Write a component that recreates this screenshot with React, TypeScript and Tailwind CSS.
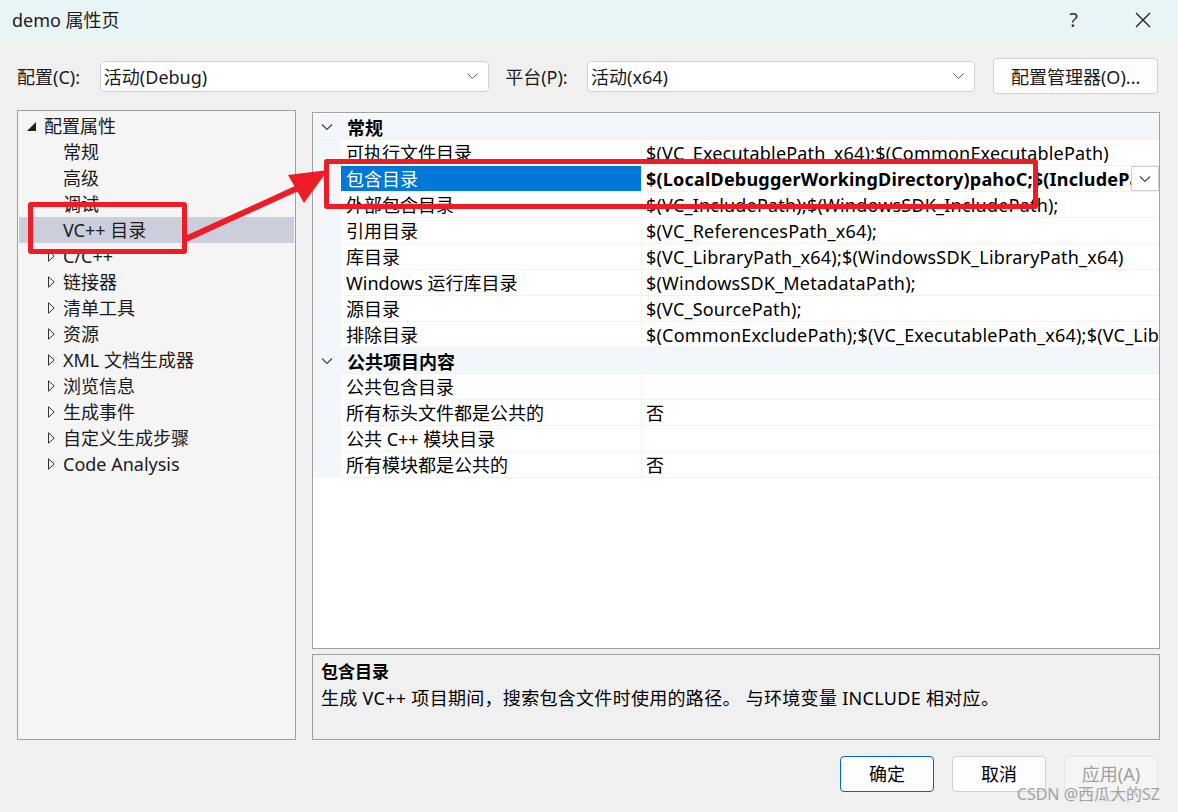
import React from "react";

const font = { fontFamily: '"Noto Sans", "Noto Sans CJK SC", sans-serif' };

const treeItems = [
  { label: "常规", kind: "leaf" },
  { label: "高级", kind: "leaf" },
  { label: "调试", kind: "leaf" },
  { label: "VC++ 目录", kind: "leaf", selected: true },
  { label: "C/C++", kind: "branch" },
  { label: "链接器", kind: "branch" },
  { label: "清单工具", kind: "branch" },
  { label: "资源", kind: "branch" },
  { label: "XML 文档生成器", kind: "branch" },
  { label: "浏览信息", kind: "branch" },
  { label: "生成事件", kind: "branch" },
  { label: "自定义生成步骤", kind: "branch" },
  { label: "Code Analysis", kind: "branch" },
];

const general = [
  ["可执行文件目录", "$(VC_ExecutablePath_x64);$(CommonExecutablePath)"],
  ["包含目录", "$(LocalDebuggerWorkingDirectory)pahoC;$(IncludePath)"],
  ["外部包含目录", "$(VC_IncludePath);$(WindowsSDK_IncludePath);"],
  ["引用目录", "$(VC_ReferencesPath_x64);"],
  ["库目录", "$(VC_LibraryPath_x64);$(WindowsSDK_LibraryPath_x64)"],
  ["Windows 运行库目录", "$(WindowsSDK_MetadataPath);"],
  ["源目录", "$(VC_SourcePath);"],
  ["排除目录", "$(CommonExcludePath);$(VC_ExecutablePath_x64);$(VC_LibraryPath_x64)"],
];

const shared = [
  ["公共包含目录", ""],
  ["所有标头文件都是公共的", "否"],
  ["公共 C++ 模块目录", ""],
  ["所有模块都是公共的", "否"],
];

function Chevron({ className = "" }: { className?: string }) {
  return (
    <svg width="12" height="8" viewBox="0 0 12 8" className={className}>
      <path d="M1 1.5 L6 6.5 L11 1.5" fill="none" stroke="#444" strokeWidth="1.2" />
    </svg>
  );
}

function Select({ value, width }: { value: string; width: string }) {
  return (
    <div className={`${width} h-[31px] bg-white border border-[#d0d0d0] rounded-[4px] flex items-center pl-[3px] pr-[10px]`}>
      <span className="flex-1 text-[18px] text-[#1a1a1a] pt-[2px]">{value}</span>
      <svg width="11" height="7" viewBox="0 0 11 7">
        <path d="M0.5 0.5 L5.5 5.5 L10.5 0.5" fill="none" stroke="#606060" strokeWidth="1" />
      </svg>
    </div>
  );
}

function CategoryRow({ label }: { label: string }) {
  return (
    <div className="h-[26px] flex items-center bg-[#f3f6fa] border-b border-[#eef1f5]">
      <div className="w-[28px] flex justify-center">
        <Chevron />
      </div>
      <span className="pl-[6px] pt-[3px] text-[18px] font-bold text-black">{label}</span>
    </div>
  );
}

function PropRow({ name, value, selected }: { name: string; value: string; selected?: boolean }) {
  return (
    <div className="h-[26px] flex bg-[#f3f6fa]">
      <div className="w-[28px]" />
      <div
        className={`w-[300px] h-[26px] flex items-center pl-[5px] pt-[2px] border-b border-[#eef1f5] text-[18px] whitespace-nowrap overflow-hidden ${
          selected ? "bg-[#0078d7] text-white" : "bg-white text-black"
        }`}
      >
        {name}
      </div>
      <div className="flex-1 min-w-0 h-[26px] flex items-center bg-white border-b border-l border-[#eef1f5] pl-[4px] pt-[2px] overflow-hidden relative">
        <span className={`whitespace-nowrap text-[18px] tracking-[0.2px] text-black ${selected ? "font-bold" : ""}`}>{value}</span>
        {selected && (
          <div className="absolute right-0 top-0 w-[28px] h-[25px] bg-white border border-[#cfcfcf] flex items-center justify-center">
            <Chevron />
          </div>
        )}
      </div>
    </div>
  );
}

function Button({ label, primary, disabled }: { label: string; primary?: boolean; disabled?: boolean }) {
  return (
    <div
      className={`w-[94px] h-[36px] rounded-[4px] flex items-center justify-center text-[18px] ${
        primary
          ? "bg-[#fdfdfd] border border-[#0067c0] text-black"
          : disabled
          ? "bg-[#f5f5f5] border border-[#e5e5e5] text-[#a0a0a0]"
          : "bg-[#fdfdfd] border border-[#d0d0d0] text-black"
      }`}
    >
      {label}
    </div>
  );
}

export default function App() {
  return (
    <div style={font} className="w-[1178px] h-[812px] relative overflow-hidden bg-[#f0f0f0]">
      {/* title bar */}
      <div className="h-[40px] bg-[#e9f4f7] flex items-center pl-[12px]">
        <span className="flex-1 text-[18px] text-[#1a1a1a]">demo 属性页</span>
        <span className="text-[20px] text-[#333] mr-[57px]">?</span>
        <svg width="16" height="16" viewBox="0 0 16 16" className="mr-[27px]">
          <path d="M1 1 L15 15 M15 1 L1 15" stroke="#222" strokeWidth="1.4" />
        </svg>
      </div>

      {/* config row */}
      <div className="h-[70px] flex items-center pl-[17px] pr-[20px] pt-[2px]">
        <span className="w-[83px] text-[18px] text-[#1a1a1a] pt-[2px]">配置(C):</span>
        <Select value="活动(Debug)" width="w-[390px]" />
        <span className="ml-[16px] w-[82px] text-[18px] text-[#1a1a1a] pt-[2px]">平台(P):</span>
        <Select value="活动(x64)" width="w-[389px]" />
        <div className="ml-[18px] w-[165px] h-[36px] bg-[#fdfdfd] border border-[#d0d0d0] rounded-[4px] flex items-center justify-center text-[18px] text-[#1a1a1a] pt-[2px]">
          配置管理器(O)...
        </div>
      </div>

      {/* main area */}
      <div className="flex pl-[17px] gap-[16px] h-[630px]">
        {/* tree */}
        <div className="w-[279px] h-[630px] bg-[#f5f5f5] border border-[#a0a0a0] pt-[2px] pl-[1px] pr-[1px]">
          <div className="h-[26px] flex items-center">
            <svg width="9" height="9" viewBox="0 0 9 9" className="ml-[8px] mr-[8px]">
              <path d="M9 0 L9 9 L0 9 Z" fill="#222" />
            </svg>
            <span className="text-[18px] text-[#1a1a1a] pt-[1px]">配置属性</span>
          </div>
          {treeItems.map((it) => (
            <div
              key={it.label}
              className={`h-[26px] flex items-center ${it.selected ? "bg-[#cccedb]" : ""}`}
            >
              <div className="w-[44px] flex justify-end pr-[8px]">
                {it.kind === "branch" && (
                  <svg width="7" height="12" viewBox="0 0 7 12">
                    <path d="M0.5 0.8 L6.2 6 L0.5 11.2 Z" fill="none" stroke="#333" strokeWidth="1" />
                  </svg>
                )}
              </div>
              <span className="text-[18px] text-[#1a1a1a] whitespace-nowrap pt-[1px]">{it.label}</span>
            </div>
          ))}
        </div>

        {/* right column */}
        <div className="w-[848px] flex flex-col pt-[2px] gap-[5px]">
          <div className="h-[537px] bg-white border border-[#a0a0a0] overflow-hidden pt-[1px]">
            <CategoryRow label="常规" />
            {general.map(([n, v]) => (
              <PropRow key={n} name={n} value={v} selected={n === "包含目录"} />
            ))}
            <CategoryRow label="公共项目内容" />
            {shared.map(([n, v]) => (
              <PropRow key={n} name={n} value={v} />
            ))}
          </div>
          <div className="h-[86px] bg-[#f0f0f0] border border-[#a0a0a0] pl-[8px] pt-[4px]">
            <div className="text-[17px] font-bold text-black leading-[26px]">包含目录</div>
            <div className="text-[18px] tracking-[0.3px] text-black leading-[26px]">
              生成 VC++ 项目期间，搜索包含文件时使用的路径。 与环境变量 INCLUDE 相对应。
            </div>
          </div>
        </div>
      </div>

      {/* footer */}
      <div className="flex justify-end gap-[18px] pr-[20px] pt-[16px]">
        <Button label="确定" primary />
        <Button label="取消" />
        <Button label="应用(A)" disabled />
      </div>

      {/* watermark */}
      <div className="absolute right-[18px] bottom-[6px] text-[16px] text-[#9a9a9a] opacity-90 pointer-events-none">
        CSDN @西瓜大的SZ
      </div>

      {/* red annotations */}
      <div className="absolute left-[28px] top-[202px] w-[159px] h-[52px] border-[5px] border-[#ee1c25] rounded-[3px] pointer-events-none" />
      <div className="absolute left-[324px] top-[159px] w-[714px] h-[50px] border-[5px] border-[#ee1c25] rounded-[3px] pointer-events-none" />
      <svg className="absolute left-0 top-0 pointer-events-none" width="1178" height="812">
        <path d="M188 238 L300 187" stroke="#ee1c25" strokeWidth="6" strokeLinecap="round" />
        <path d="M328 170 L288 175 L304 203 Z" fill="#ee1c25" />
      </svg>
    </div>
  );
}
